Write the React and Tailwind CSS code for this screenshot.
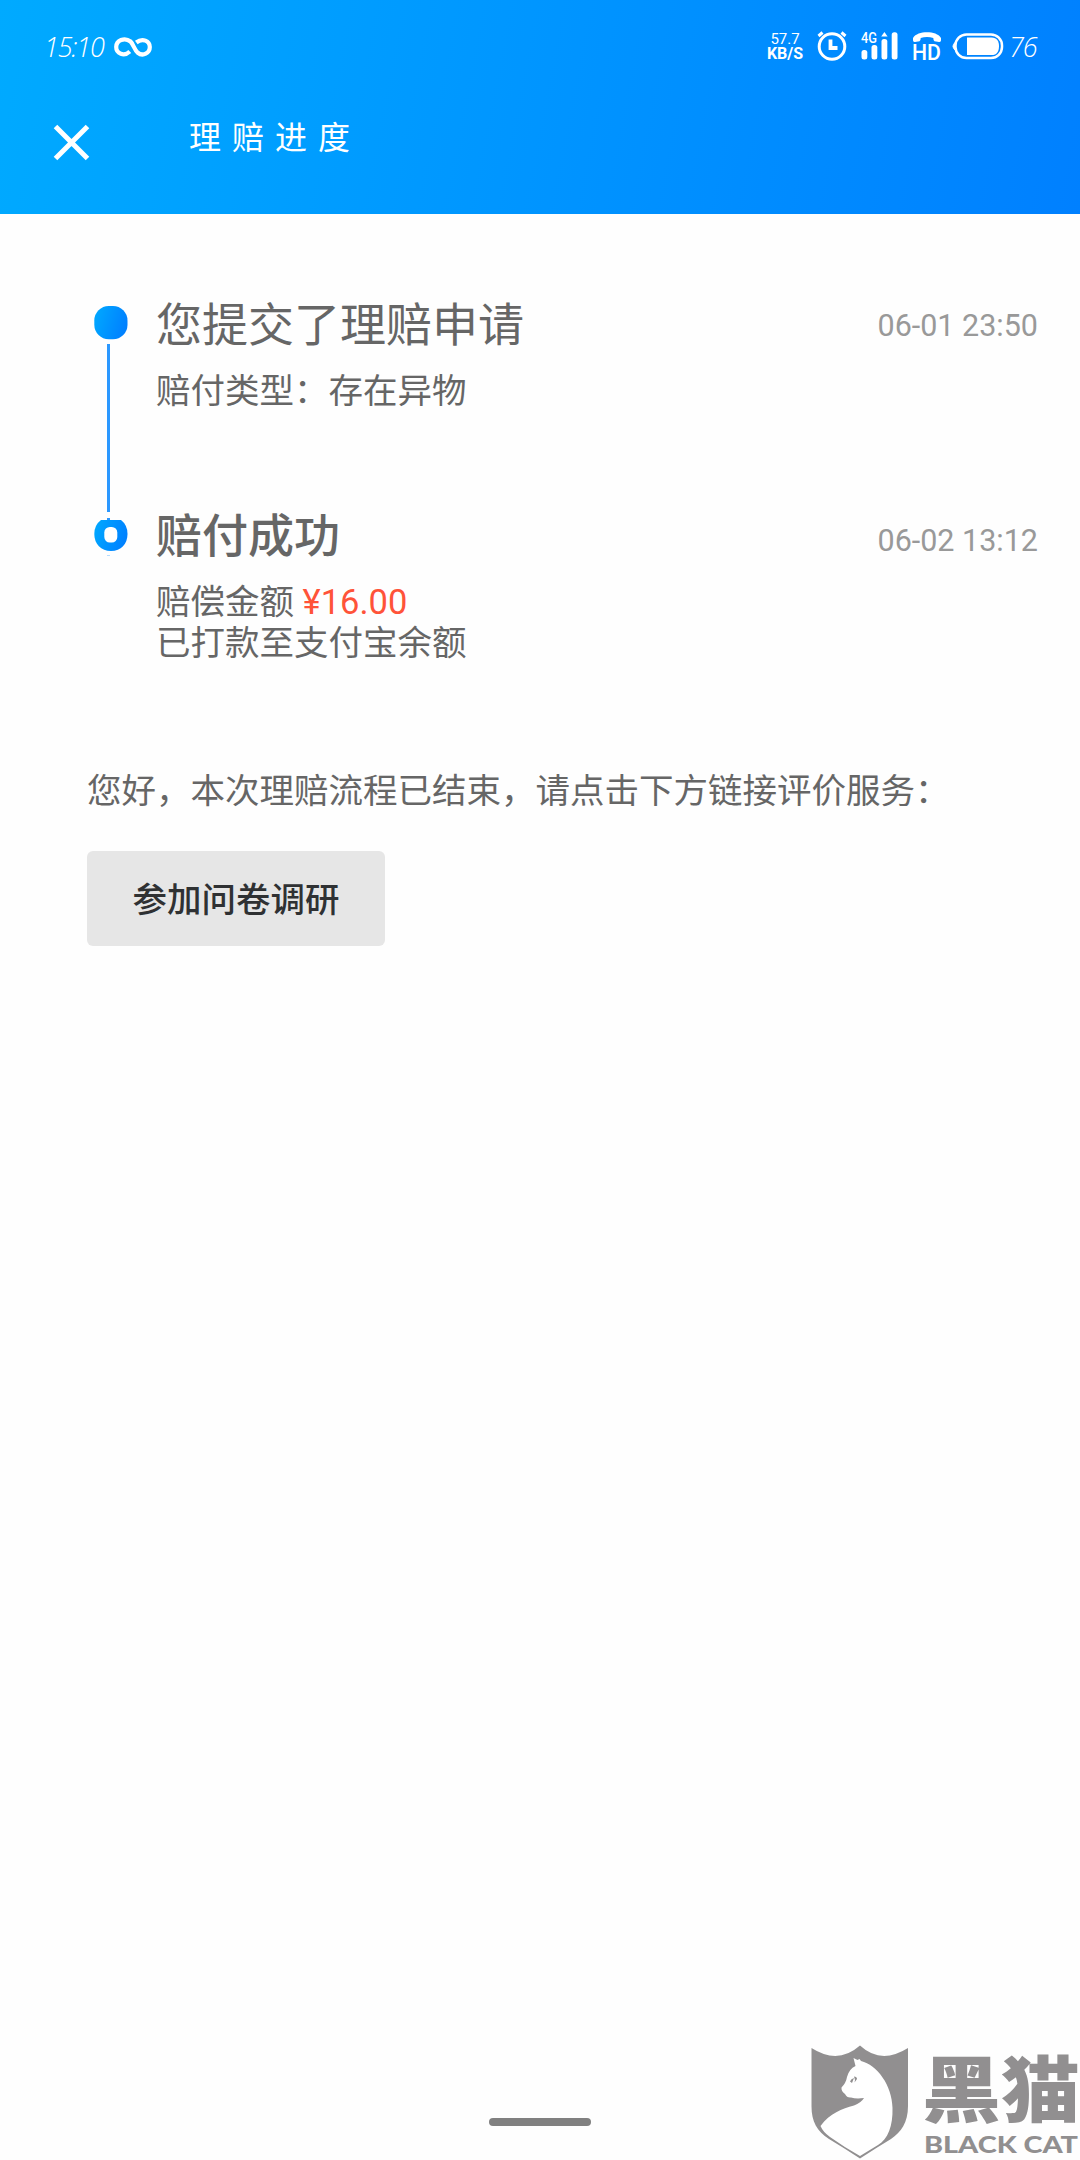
const StatusBar = () => (
  <div className="flex h-[90px] items-center justify-between pl-[44px] pr-[43px] text-white">
    <div className="flex items-center pt-[3px]">
      <span className="w-[58px] whitespace-nowrap font-['Open_Sans'] text-[27px] font-light italic leading-none tracking-[-1.2px]">15:10</span>
      <svg width="38" height="20" viewBox="0 0 38 20" className="ml-[12px]" fill="none" stroke="currentColor" strokeWidth="4.2">
        <path d="M15.800 14.500C10 20 2.200 16.500 2.200 10S10.500 -.3 16.500 4.500C19 6.500 20.500 12.800 23.500 15.500C29 20 35.800 16 35.800 10S28.500 .5 22.300 5.500" />
      </svg>
    </div>
    <div className="flex items-center pt-[2px]">
      <div className="flex w-[36px] flex-col items-center font-['Roboto'] leading-none">
        <span className="text-[15px] leading-[14px]">57.7</span>
        <span className="text-[16px] font-bold leading-[15px]">KB/S</span>
      </div>
      <svg width="30" height="30" viewBox="0 0 30 30" className="ml-[14px]" fill="none" stroke="currentColor">
        <circle cx="15" cy="15.500" r="12.800" strokeWidth="3" />
        <path d="M13.500 8.500v8.500h7" strokeWidth="3.800" />
        <path d="M1.500 5 5.500 1.500M28.500 5 24.500 1.500" strokeWidth="3" />
      </svg>
      <svg width="38" height="30" viewBox="0 0 38 30" className="ml-[14px] overflow-visible" fill="currentColor">
        <text x="0" y="12" fontFamily="Roboto" fontSize="14.500" fontWeight="500" textLength="16" lengthAdjust="spacingAndGlyphs">4G</text>
        <rect x="0.500" y="19" width="5.800" height="9.500" rx="2.500" />
        <rect x="10.500" y="14" width="5.800" height="14.500" rx="2.500" />
        <rect x="20.500" y="8" width="5.800" height="20.500" rx="2.500" />
        <path d="m23.400 1 3.200 4.500h-6.400z" />
        <rect x="30.700" y="1.300" width="5.800" height="27.200" rx="2.500" />
      </svg>
      <svg width="30" height="30" viewBox="0 0 30 30" className="ml-[13px] overflow-visible" fill="currentColor">
        <path d="M1 9.500V7C3.500 3 9 1.300 15 1.300s11.500 1.700 14 5.700v2.500q-.5 1.800-2 1.500l-4.500-.8q-1.200-.5-1.200-3.200c-4-1.300-8.600-1.300-12.600 0q0 2.700-1.200 3.200L3 11q-1.500.3-2-1.500z" />
        <text x="0" y="28.500" fontFamily="Roboto" fontSize="22" fontWeight="500" textLength="29" lengthAdjust="spacingAndGlyphs">HD</text>
      </svg>
      <svg width="52" height="28" viewBox="0 0 52 28" className="ml-[10px]" fill="none" stroke="currentColor">
        <rect x="3.500" y="2.500" width="46.500" height="23.500" rx="11" strokeWidth="2.500" />
        <path d="M3 10.500Q-1 14.300 3 18z" fill="currentColor" />
        <path d="M15 5.500h24.500c5.500 0 7.500 3.500 7.500 8.700s-2 8.800-7.500 8.800h-24.500z" fill="currentColor" stroke="none" />
      </svg>
      <span className="ml-[5px] w-[28px] whitespace-nowrap font-['Open_Sans'] text-[27px] font-light italic leading-none tracking-[-1px]">76</span>
    </div>
  </div>
);

const Header = () => (
  <header className="h-[214px] bg-[linear-gradient(101deg,#00aaff,#0080ff)]">
    <StatusBar />
    <div className="flex h-[106px] items-center pl-[53px] text-white">
      <svg width="37" height="37" viewBox="0 0 37 37" className="-mt-[2px]" stroke="currentColor" strokeWidth="5">
        <path d="m2.500 2.500 32 32M34.500 2.500l-32 32" />
      </svg>
      <h1 className="-mt-[10px] ml-[99px] text-[32px] tracking-[11px]">理赔进度</h1>
    </div>
  </header>
);

const SubmittedMarker = () => (
  <svg width="34" height="214" viewBox="0 0 34 214">
    <defs>
      <linearGradient id="dot" x1="0" y1="0.2" x2="1" y2="0.5">
        <stop stopColor="#00a8ff" />
        <stop offset="1" stopColor="#0080ff" />
      </linearGradient>
    </defs>
    <rect x="0.300" y="0" width="33.200" height="33.200" rx="14.500" fill="url(#dot)" />
    <path d="M14.500 38v168M14.500 212v2" stroke="#2b98ff" strokeWidth="3" />
  </svg>
);

const PaidMarker = () => (
  <svg width="34" height="38" viewBox="0 0 34 38">
    <path d="M7 0H27Q33.500 5 33.500 14C33.500 24 27 31 17 31S.3 24 .3 14Q.3 5 7 0Z" fill="url(#dot)" />
    <rect x="10.300" y="7" width="13" height="15.500" rx="5.500" fill="#fff" />
    <path d="M13 35.500h3" stroke="#b5dcff" />
  </svg>
);

const Step = ({ marker, title, titleClass, bodyClass, time, timeClass, children }) => (
  <div className="flex">
    <div className="w-[62px] shrink-0">{marker}</div>
    <div className="flex-1">
      <h2 className={`text-[46px] leading-[46px] ${titleClass}`}>{title}</h2>
      <div className={`text-[34.5px] leading-[41px] ${bodyClass}`}>{children}</div>
    </div>
    <time className={`font-['Roboto'] text-[30.5px] leading-[36px] text-[#999] ${timeClass}`}>{time}</time>
  </div>
);

const Watermark = () => (
  <svg width="270" height="116" viewBox="810 2044 270 116" className="absolute bottom-0 right-0 overflow-visible" fill="#918f90">
    <path d="M811.500 2048Q838 2065 860 2045.500Q881 2065 908 2048V2106C908 2123 901 2132 891 2139Q876 2148 860 2158.500Q844 2148 829 2139C817 2131 811.500 2122 811.500 2106Z" />
    <path
      fill="#fff"
      d="M853.500 2058L857.500 2060L859.500 2059L861 2061C877 2065 892 2085 892.500 2108C893 2126 888 2139 878 2145L860 2156Q844 2147 830 2137Q823 2132 820.500 2126C830 2113 842 2109 854 2105.500Q861 2103 864 2098Q856 2099 851 2097.500Q847 2098 845 2094Q841 2091 841.500 2087.500Q846 2083 847 2077Q849 2069 855.500 2066Z"
    />
    <path d="M850 2081.500q1-3 4-3.500l-2 5zM854 2076.500q3 0 3 2.500l-2.500 3.500q1-3-.5-6z" />
    <text x="922" y="2116" fontFamily="Lato, Noto Sans CJK SC" fontSize="72" fontWeight="900" textLength="158" lengthAdjust="spacingAndGlyphs">黑猫</text>
    <text x="924" y="2153" fontFamily="Lato" fontSize="23" fontWeight="900" textLength="154" lengthAdjust="spacingAndGlyphs">BLACK CAT</text>
  </svg>
);

const App = () => (
  <div className="relative flex h-[2160px] w-[1080px] flex-col overflow-hidden bg-[#fefefe] font-['Roboto','Noto_Sans_CJK_SC',sans-serif] text-[#666]">
    <Header />
    <main className="flex-1">
      <section className="pl-[94px] pr-[42px] pt-[92px]">
        <Step
          marker={<SubmittedMarker />}
          title="您提交了理赔申请"
          titleClass="-mt-1"
          bodyClass="mt-[23px]"
          time="06-01 23:50"
          timeClass="mt-[2px]"
        >
          赔付类型：存在异物
        </Step>
        <Step
          marker={<PaidMarker />}
          title="赔付成功"
          titleClass="-mt-[7px] font-medium"
          bodyClass="mt-[23px]"
          time="06-02 13:12"
          timeClass="mt-[3px]"
        >
          <p>
            赔偿金额 <span className="text-[#ff5339]">¥16.00</span>
          </p>
          <p>已打款至支付宝余额</p>
        </Step>
      </section>
      <section className="mt-[104px] pl-[87px]">
        <p className="text-[34.5px] leading-[46px]">您好，本次理赔流程已结束，请点击下方链接评价服务：</p>
        <button className="mt-[37px] h-[95px] w-[298px] rounded-[6px] bg-[#e6e6e6] pt-1 text-[34.5px] font-medium text-[#2f3133]">
          参加问卷调研
        </button>
      </section>
    </main>
    <footer className="flex h-[42px] justify-center">
      <div className="h-2 w-[102px] rounded-full bg-[#808080]" />
    </footer>
    <Watermark />
  </div>
);

export default App;
